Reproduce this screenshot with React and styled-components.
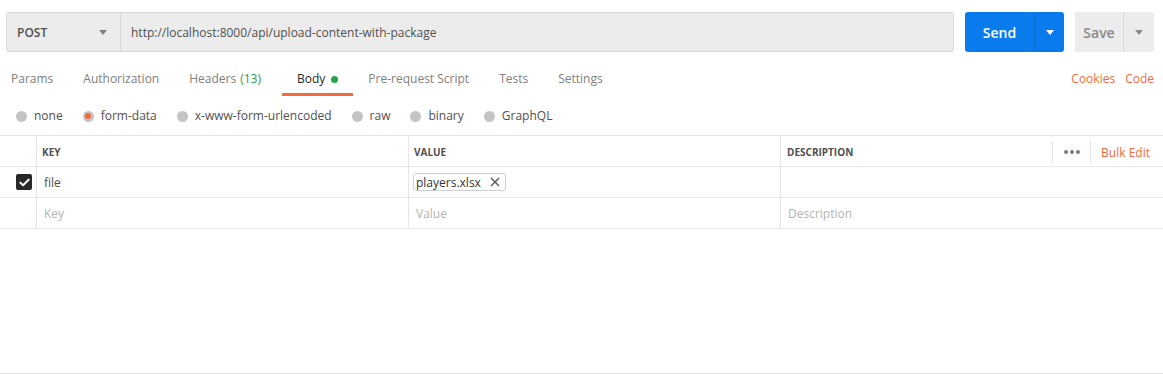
import React from 'react'
import styled, { createGlobalStyle } from 'styled-components'

const GlobalStyle = createGlobalStyle`
body {
  margin: 0;
  background: #fff;
  font-family: "Open Sans", "Liberation Sans", sans-serif;
  font-size: 12px;
  color: #505050;
}
* { box-sizing: border-box; }
`

const Page = styled.div`
height: 374px;
display: flex;
flex-direction: column;
`

const UrlRow = styled.div`
display: flex;
height: 40px;
margin: 12px 9px 0 6px;
gap: 11px;
`

const UrlGroup = styled.div`
flex: 1;
display: flex;
background: #ececec;
border: 1px solid #d8d8d8;
border-radius: 3px;
`

const Method = styled.div`
width: 114px;
display: flex;
align-items: center;
justify-content: space-between;
padding: 0 13px 0 10px;
border-right: 1px solid #d8d8d8;
font-weight: 600;
font-size: 12px;
color: #505050;
`

const Caret = styled.span`
width: 0;
height: 0;
border-left: 4px solid transparent;
border-right: 4px solid transparent;
border-top: 5px solid ${props => props.color || '#808080'};
`

const UrlText = styled.div`
flex: 1;
display: flex;
align-items: center;
padding-left: 10px;
color: #505050;
`

const SplitButton = styled.div`
display: flex;
width: ${props => props.width}px;
background: ${props => props.primary ? '#097bed' : '#ececec'};
border-radius: 3px;
color: ${props => props.primary ? '#fff' : '#8a8a8a'};
font-size: 14px;
font-weight: 600;
`

const ButtonMain = styled.div`
width: ${props => props.width}px;
display: flex;
align-items: center;
justify-content: center;
border-right: 1px solid ${props => props.primary ? '#0a6fd4' : '#d8d8d8'};
`

const ButtonDrop = styled.div`
flex: 1;
display: flex;
align-items: center;
justify-content: center;
`

const TabsRow = styled.div`
display: flex;
align-items: flex-start;
margin: 9px 9px 0 -4px;
`

const Tab = styled.div`
display: flex;
align-items: center;
padding: 10px 15px 6px;
line-height: 16px;
font-size: 12px;
color: ${props => props.active ? '#282828' : '#808080'};
border-bottom: 3px solid ${props => props.active ? '#f26b3a' : 'transparent'};
`

const Count = styled.span`
color: #2a9d4f;
margin-left: 4px;
margin-right: 6px;
`

const Dot = styled.span`
width: 7px;
height: 7px;
border-radius: 50%;
background: #26a24b;
margin-left: 6px;
`

const Spacer = styled.div`
flex: 1;
`

const Link = styled.span`
color: #f26b3a;
font-size: 12px;
padding: 10px 0 0;
line-height: 16px;
margin-left: ${props => props.gap || 0}px;
`

const RadioRow = styled.div`
display: flex;
align-items: center;
padding: 12px 0 11px 16px;
line-height: 16px;
gap: 20px;
`

const RadioItem = styled.label`
display: flex;
align-items: center;
gap: 7px;
color: #505050;
font-size: 12px;
`

const RadioCircle = styled.span`
width: 11px;
height: 11px;
border-radius: 50%;
background: #c4c4c4;
display: flex;
align-items: center;
justify-content: center;
&::after {
  content: '';
  width: 6px;
  height: 6px;
  border-radius: 50%;
  background: ${props => props.checked ? '#f26b3a' : 'transparent'};
}
`

const Table = styled.div`
border-top: 1px solid #e6e6e6;
`

const Row = styled.div`
display: grid;
grid-template-columns: 36px 372px 372px 1fr;
height: 31px;
border-bottom: 1px solid #e6e6e6;
`

const Cell = styled.div`
display: flex;
align-items: center;
padding-left: ${props => props.pad ?? 7}px;
border-left: ${props => props.first ? 'none' : '1px solid #e6e6e6'};
color: ${props => props.placeholder ? '#b3b3b3' : '#505050'};
font-size: 12px;
`

const HeadCell = styled(Cell)`
font-size: 10px;
font-weight: 700;
color: #505050;
`

const HeadActions = styled.div`
margin-left: auto;
display: flex;
align-items: center;
height: 100%;
padding: 5px 0;
`

const Divider = styled.span`
width: 1px;
height: 22px;
background: #e6e6e6;
`

const More = styled.span`
width: 37px;
display: flex;
justify-content: center;
gap: 2px;
& > i {
  width: 4px;
  height: 4px;
  border-radius: 50%;
  background: #7a7a7a;
}
`

const BulkEdit = styled.span`
color: #f26b3a;
font-size: 12px;
font-weight: 400;
padding: 0 13px 0 10px;
`

const Check = styled.span`
width: 16px;
height: 16px;
border-radius: 2px;
background: #282828;
display: flex;
align-items: center;
justify-content: center;
`

const FileTag = styled.span`
display: inline-flex;
align-items: center;
height: 18px;
padding: 0 5px 0 2px;
border: 1px solid #cfcfcf;
border-radius: 3px;
font-size: 12px;
color: #333;
gap: 9px;
margin-left: -3px;
`

const Filler = styled.div`
flex: 1;
border-bottom: 1px solid #dedede;
`

const tabs = ['Params', 'Authorization', 'Headers', 'Body', 'Pre-request Script', 'Tests', 'Settings']
const modes = ['none', 'form-data', 'x-www-form-urlencoded', 'raw', 'binary', 'GraphQL']

export default function App() {
  return (
    <Page>
      <GlobalStyle />
      <UrlRow>
        <UrlGroup>
          <Method>POST<Caret /></Method>
          <UrlText>http://localhost:8000/api/upload-content-with-package</UrlText>
        </UrlGroup>
        <SplitButton primary width={99}>
          <ButtonMain primary width={70}>Send</ButtonMain>
          <ButtonDrop><Caret color="#fff" /></ButtonDrop>
        </SplitButton>
        <SplitButton width={79}>
          <ButtonMain width={49}>Save</ButtonMain>
          <ButtonDrop><Caret color="#8a8a8a" /></ButtonDrop>
        </SplitButton>
      </UrlRow>

      <TabsRow>
        {tabs.map(t => (
          <Tab key={t} active={t === 'Body'}>
            {t}
            {t === 'Headers' && <Count>(13)</Count>}
            {t === 'Body' && <Dot />}
          </Tab>
        ))}
        <Spacer />
        <Link>Cookies</Link>
        <Link gap={10}>Code</Link>
      </TabsRow>

      <RadioRow>
        {modes.map(m => (
          <RadioItem key={m}>
            <RadioCircle checked={m === 'form-data'} />
            {m}
          </RadioItem>
        ))}
      </RadioRow>

      <Table>
        <Row>
          <Cell first />
          <HeadCell pad={5}>KEY</HeadCell>
          <HeadCell pad={5}>VALUE</HeadCell>
          <HeadCell pad={6}>
            DESCRIPTION
            <HeadActions>
              <Divider />
              <More><i /><i /><i /></More>
              <Divider />
              <BulkEdit>Bulk Edit</BulkEdit>
            </HeadActions>
          </HeadCell>
        </Row>
        <Row>
          <Cell first pad={16}>
            <Check>
              <svg width="11" height="9" viewBox="0 0 11 9">
                <path d="M1.3 4.6 L4.1 7.3 L9.7 1.6" stroke="#fff" strokeWidth="2" fill="none" strokeLinecap="round" strokeLinejoin="round" />
              </svg>
            </Check>
          </Cell>
          <Cell>file</Cell>
          <Cell>
            <FileTag>
              players.xlsx
              <svg width="10" height="10" viewBox="0 0 10 10">
                <path d="M1 1 L9 9 M9 1 L1 9" stroke="#555" strokeWidth="1.4" />
              </svg>
            </FileTag>
          </Cell>
          <Cell />
        </Row>
        <Row>
          <Cell first />
          <Cell placeholder>Key</Cell>
          <Cell placeholder>Value</Cell>
          <Cell placeholder>Description</Cell>
        </Row>
      </Table>
      <Filler />
    </Page>
  )
}
